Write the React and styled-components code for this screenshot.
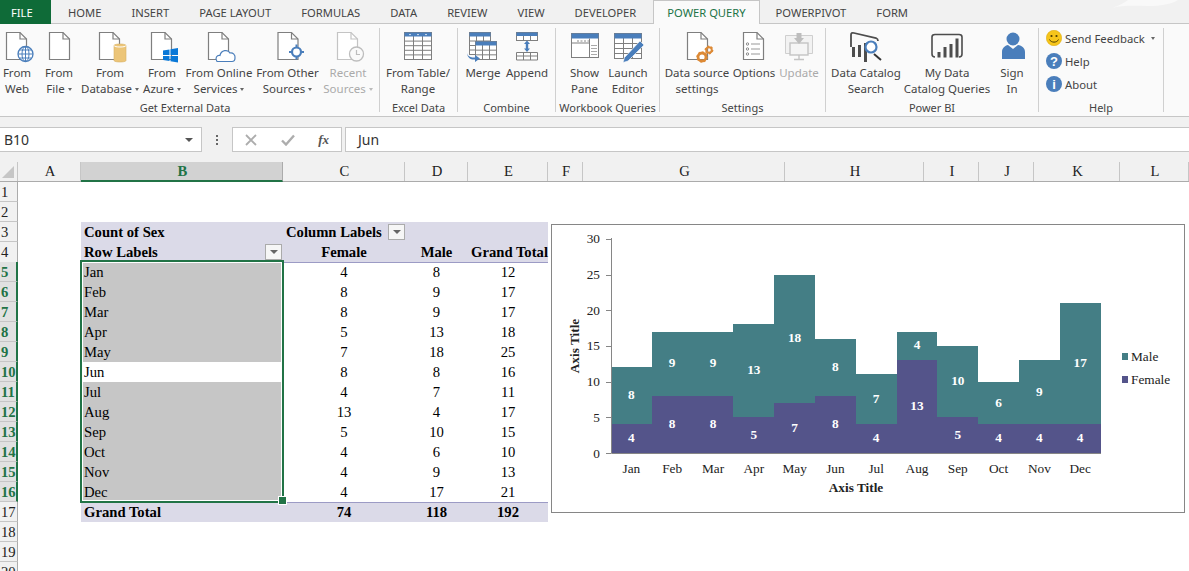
import React from 'react'
import styled, { createGlobalStyle } from 'styled-components'

const GlobalStyle = createGlobalStyle`
  html, body {
    margin: 0;
    padding: 0;
    background: #fff;
    overflow: hidden;
  }
  * { box-sizing: border-box; }
`

const uiFont = `"Noto Sans", "Open Sans", sans-serif`
const cellFont = `"Liberation Serif", "Times New Roman", serif`
const blue = '#4a7ebb'
const line = '#7f7f7f'

const tabs = ['HOME', 'INSERT', 'PAGE LAYOUT', 'FORMULAS', 'DATA', 'REVIEW', 'VIEW', 'DEVELOPER', 'POWER QUERY', 'POWERPIVOT', 'FORM']

const columns = [
  ['A', 63], ['B', 202], ['C', 122], ['D', 63], ['E', 80], ['F', 35],
  ['G', 202], ['H', 139], ['I', 55], ['J', 55], ['K', 86], ['L', 69],
]

const months = ['Jan', 'Feb', 'Mar', 'Apr', 'May', 'Jun', 'Jul', 'Aug', 'Sep', 'Oct', 'Nov', 'Dec']
const female = [4, 8, 8, 5, 7, 8, 4, 13, 5, 4, 4, 4]
const male = [8, 9, 9, 13, 18, 8, 7, 4, 10, 6, 9, 17]

const Page = styled.div`
  width: 1189px;
  height: 571px;
  overflow: hidden;
  position: relative;
  background: #fff;
  font-family: ${uiFont};
`

/* tabs */
const TabBar = styled.div`
  position: relative;
  display: flex;
  height: 24px;
  background: #f1f1f1;
  border-bottom: 1px solid #c6c6c6;
  font-size: 11.2px;
  color: #444;
`

const Swoosh = styled.svg`
  position: absolute;
  right: 0;
  top: 0;
  width: 89px;
  height: 23px;
`

const FileTab = styled.div`
  width: 51px;
  height: 24px;
  padding-left: 11px;
  background: #0f6b38;
  color: #fff;
  display: flex;
  align-items: center;
  margin-right: 2px;
`

const Tab = styled.div`
  height: 24px;
  padding: 0 15px;
  display: flex;
  align-items: center;
  white-space: nowrap;
  ${p => p.$active && `
    background: #fafafa;
    color: #217346;
    border: 1px solid #c6c6c6;
    border-bottom: none;
    padding: 0 13px;
    margin: 0 1px 0 2px;
  `}
`

/* ribbon */
const Ribbon = styled.div`
  display: flex;
  height: 93px;
  background: #fafafa;
  border-bottom: 1px solid #c6c6c6;
`

const Group = styled.div`
  width: ${p => p.$w}px;
  flex: none;
  display: flex;
  flex-direction: column;
  justify-content: space-between;
`

const Buttons = styled.div`
  display: flex;
`

const GroupLabel = styled.div`
  height: 16px;
  line-height: 16px;
  padding-right: ${p => p.$pr || 0}px;
  text-align: center;
  font-size: 11px;
  color: #444;
  white-space: nowrap;
`

const Sep = styled.div`
  width: 1px;
  flex: none;
  margin: 4px 0;
  background: #d0d0d0;
`

const RibbonButton = styled.div`
  width: ${p => p.$w}px;
  flex: none;
  padding-top: 6px;
  display: flex;
  flex-direction: column;
  align-items: center;
  font-size: 11.5px;
  line-height: 16px;
  white-space: nowrap;
  color: ${p => (p.$off ? '#aaa' : '#444')};
`

const Glyph = styled.svg`
  width: 34px;
  height: 32px;
  margin-bottom: 3px;
  overflow: visible;
  flex: none;
`

const Caret = styled.span`
  display: inline-block;
  margin-left: 3px;
  vertical-align: 2px;
  border-left: 2.5px solid transparent;
  border-right: 2.5px solid transparent;
  border-top: 3px solid ${p => (p.$off ? '#bbb' : '#666')};
`

const HelpList = styled.div`
  display: flex;
  flex-direction: column;
  gap: 7px;
  padding: 6px 0 0 7px;
`

const HelpRow = styled.div`
  display: flex;
  align-items: center;
  gap: 3px;
  height: 16px;
  font-size: 11.3px;
  color: #444;
  white-space: nowrap;
`

/* formula bar */
const FormulaStrip = styled.div`
  display: flex;
  align-items: stretch;
  height: 35px;
  padding-top: 10px;
  background: #f1f1f1;
`

const NameBox = styled.div`
  width: 202px;
  flex: none;
  display: flex;
  align-items: center;
  justify-content: space-between;
  padding: 0 8px 0 4px;
  background: #fff;
  border: 1px solid #c6c6c6;
  border-left: none;
  font-size: 14px;
  color: #333;
`

const DownArrow = styled.span`
  border-left: 4px solid transparent;
  border-right: 4px solid transparent;
  border-top: 4px solid #555;
`

const Dots = styled.div`
  width: 30px;
  flex: none;
  display: flex;
  flex-direction: column;
  align-items: center;
  justify-content: center;
  gap: 2px;
  span {
    width: 2px;
    height: 2px;
    background: #666;
  }
`

const FxBox = styled.div`
  width: 110px;
  flex: none;
  display: flex;
  align-items: center;
  justify-content: space-between;
  padding: 0 12px 0 12px;
  background: #fff;
  border: 1px solid #c6c6c6;
  margin-right: 3px;
`

const FxText = styled.span`
  font-family: ${cellFont};
  font-style: italic;
  font-weight: bold;
  font-size: 13px;
  color: #555;
`

const FormulaInput = styled.div`
  flex: 1;
  display: flex;
  align-items: center;
  padding-left: 12px;
  background: #fff;
  border: 1px solid #c6c6c6;
  border-right: none;
  font-size: 14px;
  color: #333;
`

/* sheet */
const Gap = styled.div`
  height: 10px;
  background: #f1f1f1;
`

const ColumnHeaders = styled.div`
  display: flex;
  height: 20px;
  background: #f1f1f1;
  border-bottom: 1px solid #ababab;
`

const Corner = styled.div`
  width: 18px;
  flex: none;
  border-right: 1px solid #c6c6c6;
  svg { display: block; }
`

const ColumnHead = styled.div`
  width: ${p => p.$w}px;
  flex: none;
  height: ${p => (p.$active ? 20 : 19)}px;
  padding-left: 2px;
  display: flex;
  align-items: center;
  justify-content: center;
  font-family: ${cellFont};
  font-size: 14.67px;
  color: #222;
  border-right: 1px solid #c6c6c6;
  ${p => p.$active && `
    background: #d2d2d2;
    color: #217346;
    font-weight: bold;
    border-bottom: 2px solid #217346;
    border-right: 1px solid #ababab;
  `}
`

const Row = styled.div`
  display: grid;
  grid-template-columns: 18px 63px 202px 122px 63px 80px;
  height: 20px;
  font-family: ${cellFont};
  font-size: 14.67px;
  line-height: 20px;
  color: #000;
`

const RowNum = styled.div`
  grid-column: 1;
  background: ${p => (p.$active ? '#e1e1e1' : '#f1f1f1')};
  color: ${p => (p.$active ? '#217346' : '#222')};
  font-weight: ${p => (p.$active ? 'bold' : 'normal')};
  border-bottom: 1px solid #c6c6c6;
  border-right: ${p => (p.$active ? '2px solid #217346' : '1px solid #ababab')};
  padding-left: 1px;
  overflow: hidden;
`

const Cell = styled.div`
  grid-column: ${p => p.$col};
  position: relative;
  padding: 0 3px;
  white-space: nowrap;
  text-align: ${p => p.$align || 'left'};
  font-weight: ${p => (p.$bold ? 'bold' : 'normal')};
  background: ${p => p.$bg || 'transparent'};
  ${p => p.$under && `border-bottom: 1px solid #9c9bc5;`}
  ${p => p.$over && `border-top: 1px solid #9c9bc5; line-height: 18px;`}
`

const FilterButton = styled.span`
  position: absolute;
  top: 2px;
  right: ${p => p.$right}px;
  width: 17px;
  height: 16px;
  background: #f6f6f6;
  border: 1px solid #ababab;
  display: flex;
  align-items: center;
  justify-content: center;
  &::after {
    content: '';
    border-left: 4px solid transparent;
    border-right: 4px solid transparent;
    border-top: 4px solid #666;
  }
`

const Selection = styled.div`
  position: absolute;
  left: 80px;
  top: 260px;
  width: 204px;
  height: 243px;
  border: 2px solid #217346;
  outline: 1px solid #fff;
  outline-offset: -3px;
  pointer-events: none;
  &::after {
    content: '';
    position: absolute;
    right: -5px;
    bottom: -4px;
    width: 7px;
    height: 7px;
    background: #217346;
    border: 1px solid #fff;
  }
`

const ChartFrame = styled.div`
  position: absolute;
  left: 551px;
  top: 224px;
  width: 634px;
  height: 289px;
  background: #fff;
  border: 1px solid #868686;
  svg {
    display: block;
    font-family: ${cellFont};
    font-size: 13.3px;
    fill: #222;
  }
`

const Doc = ({ x = 6, off }) => (
  <g fill="#fff" stroke={off ? '#c4c4c4' : line} strokeWidth="1.2">
    <path d={`M${x + .5} 2.5H${x + 14}L${x + 20.5} 9V29.5H${x + .5}Z`} />
    <path d={`M${x + 14} 2.5V9H${x + 20.5}`} fill="none" />
  </g>
)

const GridTable = ({ x, y, w, h, cols, rows, head = 5 }) => {
  const parts = []
  for (let i = 1; i < cols; i++) {
    const px = x + (w * i) / cols
    parts.push(<path key={'c' + i} d={`M${px} ${y}V${y + h}`} />)
  }
  for (let i = 1; i < rows; i++) {
    const py = y + head + ((h - head) * i) / rows
    parts.push(<path key={'r' + i} d={`M${x} ${py}H${x + w}`} />)
  }
  return (
    <g>
      <rect x={x} y={y} width={w} height={h} fill="#fff" stroke={line} />
      <g stroke={line} fill="none">{parts}</g>
      <rect x={x} y={y} width={w} height={head} fill={blue} />
    </g>
  )
}

const Gear = ({ cx, cy, r }) => (
  <g>
    <circle cx={cx} cy={cy} r={r} fill="none" stroke="#dd8a36" strokeWidth={r * 0.7} />
    <circle cx={cx} cy={cy} r={r + 0.7} fill="none" stroke="#dd8a36" strokeWidth="1.8" strokeDasharray="1.8 1.8" />
  </g>
)

const icons = {
  web: (
    <>
      <Doc />
      <circle cx="25.5" cy="24" r="7.5" fill="#fff" stroke={blue} strokeWidth="1.3" />
      <path d="M18 24H33M25.5 16.5V31.5M19.5 20H31.5M19.5 28H31.5" stroke={blue} fill="none" />
      <ellipse cx="25.5" cy="24" rx="3.5" ry="7.5" fill="none" stroke={blue} />
    </>
  ),
  file: <Doc x={7} />,
  database: (
    <>
      <Doc />
      <path d="M21 15.5C21 13.5 33 13.5 33 15.5V30.5C33 32.5 21 32.5 21 30.5Z" fill="#ecc578" stroke="#d9b264" strokeWidth=".6" />
      <path d="M21 15.5C21 17.5 33 17.5 33 15.5" fill="none" stroke="#fff" />
    </>
  ),
  azure: (
    <>
      <Doc />
      <path d="M18 20.5L24.5 19.5V25H18ZM25.5 19.3L33 18V25H25.5ZM18 26H24.5V31L18 30ZM25.5 26H33V32.5L25.5 31.2Z" fill="#0a78d7" />
    </>
  ),
  cloud: (
    <>
      <Doc />
      <path d="M15 31.5C12.5 28 15 25 18 25.5C19 20 26 19 28 23C31 22.5 33.5 25 33 28C33 30 32 31.5 30 31.5Z" fill="#fff" stroke={blue} strokeWidth="1.2" />
    </>
  ),
  other: (
    <>
      <Doc x={6.5} />
      <circle cx="25.5" cy="22" r="4.5" fill="#fff" stroke={blue} strokeWidth="2.2" />
      <path d="M25.5 14.5V18M25.5 26V29.5M18 22H21.5M29.5 22H33" stroke={blue} strokeWidth="2" />
    </>
  ),
  recent: (
    <>
      <Doc off />
      <circle cx="25.5" cy="24" r="7" fill="#fafafa" stroke="#bdbdbd" strokeWidth="1.3" />
      <path d="M25.5 20V24.5H29" fill="none" stroke="#bdbdbd" strokeWidth="1.2" />
    </>
  ),
  table: (
    <>
      <GridTable x={3.5} y={2.5} w={27} h={27} cols={3} rows={5} head={4} />
      <path d="M8 4L10 4L9 5.5ZM16 4L18 4L17 5.5ZM24 4L26 4L25 5.5Z" fill="#fff" />
    </>
  ),
  merge: (
    <>
      <GridTable x={3.5} y={2.5} w={21} h={22} cols={3} rows={4} head={4} />
      <GridTable x={9.5} y={11.5} w={21} h={18} cols={3} rows={3} head={4} />
      <path d="M1 23C2 27 6 28 9 27.5V25L14 28.5L9 32V29.5C5 30 1.5 28 1 23Z" fill={blue} />
    </>
  ),
  append: (
    <>
      <GridTable x={6.5} y={2.5} w={21} h={8} cols={3} rows={1} head={3.5} />
      <path d="M6.5 22.5H27.5V30H6.5ZM6.5 26H27.5M13.5 22.5V30M20.5 22.5V30" fill="#fff" stroke={line} />
      <path d="M17 10.5L20 14H18.2V18.5H20L17 22L14 18.5H15.8V14H14Z" fill={blue} />
    </>
  ),
  pane: (
    <>
      <rect x="3.5" y="3.5" width="27" height="24" fill="#fff" stroke={line} />
      <rect x="3.5" y="3.5" width="27" height="5" fill={blue} />
      <path d="M21.5 8.5V27.5M21.5 13H3.5" stroke={line} fill="none" />
      <path d="M23 15.5H29M23 18.5H29M23 21.5H29M23 24.5H29" stroke="#aaa" />
      <path d="M9 11H11M12.5 11H14.5M16 11H18M19.5 11H21" stroke="#888" />
    </>
  ),
  editor: (
    <>
      <GridTable x={3.5} y={3.5} w={27} h={25} cols={3} rows={4} head={5} />
      <path d="M29 11L33 15L17 31L12 32.5L13.5 27.5Z" fill={blue} stroke="#fff" strokeWidth=".6" />
    </>
  ),
  source: (
    <>
      <Doc x={7} />
      <Gear cx={22} cy={27} r={4} />
      <Gear cx={29} cy={20} r={2.8} />
    </>
  ),
  options: (
    <>
      <Doc />
      <circle cx="10.5" cy="14" r="1.2" fill="none" stroke="#888" />
      <circle cx="10.5" cy="19" r="1.2" fill="none" stroke="#888" />
      <circle cx="10.5" cy="24" r="1.2" fill="none" stroke="#888" />
      <path d="M14 14H23M14 19H23M14 24H23" stroke="#999" />
    </>
  ),
  update: (
    <>
      <path d="M3.5 5.5H30.5V23.5H3.5Z" fill="#f2f2f2" stroke="#cfcfcf" />
      <rect x="8" y="13" width="18" height="12" fill="#f5f5f5" stroke="#c4c4c4" strokeWidth="1.4" />
      <path d="M17 25V29M12 29.5H22" stroke="#c4c4c4" strokeWidth="1.4" />
      <path d="M14.5 3V8H12L17 14L22 8H19.5V3Z" fill="#bdbdbd" />
    </>
  ),
  catalog: (
    <>
      <path d="M2 17V5C2 3 3 2.5 5 3L27 8C28.5 8.5 29 9 29 11" fill="none" stroke="#4d4d4d" strokeWidth="1.8" />
      <path d="M3 17H6V27H3ZM9 15H12V27H9ZM15 13H18V32H15Z" fill="#4d4d4d" />
      <path d="M25 24L32 30" stroke="#333" strokeWidth="2" />
      <circle cx="22" cy="17" r="5.5" fill="#fff" stroke={blue} strokeWidth="2.2" />
    </>
  ),
  myData: (
    <>
      <path d="M5 27C3 27 2 26 2 24V7C2 5 3 4.5 5 4.5H29C31 4.5 32 5 32 7V24C32 26 31 27 29 27" fill="none" stroke="#4d4d4d" strokeWidth="1.6" />
      <path d="M7.5 22H10.5V27.5H7.5ZM13.5 17H16.5V27.5H13.5ZM19.5 14H22.5V27.5H19.5ZM25.5 8.5H28.5V27.5H25.5Z" fill="#4d4d4d" />
    </>
  ),
  person: (
    <>
      <circle cx="18" cy="9" r="6.5" fill={blue} />
      <path d="M7 29V22C7 18 10 15.5 13 15L18 19L23 15C27 15.5 30 18 30 22V29Z" fill={blue} />
    </>
  ),
}

const Cross = () => (
  <svg width="12" height="12" viewBox="0 0 12 12">
    <path d="M1 1L11 11M11 1L1 11" stroke="#adadad" strokeWidth="1.8" />
  </svg>
)

const Tick = () => (
  <svg width="14" height="12" viewBox="0 0 14 12">
    <path d="M1 6.5L5 10.5L13 1.5" fill="none" stroke="#adadad" strokeWidth="2.4" />
  </svg>
)

const Smiley = () => (
  <svg width="16" height="16" viewBox="0 0 16 16">
    <circle cx="8" cy="8" r="7.7" fill="#f6c51b" stroke="#d9a400" strokeWidth=".5" />
    <circle cx="5.5" cy="6" r="1.1" fill="#4d3b00" />
    <circle cx="10.5" cy="6" r="1.1" fill="#4d3b00" />
    <path d="M3.5 9.5C5 13 11 13 12.5 9.5" fill="none" stroke="#4d3b00" strokeWidth="1" />
  </svg>
)

const RoundGlyph = ({ children }) => (
  <svg width="16" height="16" viewBox="0 0 16 16">
    <circle cx="8" cy="8" r="8" fill={blue} />
    <text x="8" y="12.6" textAnchor="middle" fontSize="13" fontWeight="bold" fontFamily="Liberation Sans, sans-serif" fill="#fff">{children}</text>
  </svg>
)

const Btn = ({ w, icon, l1, l2, caret, off }) => (
  <RibbonButton $w={w} $off={off}>
    <Glyph viewBox="0 0 34 32">{icons[icon]}</Glyph>
    <div>{l1}</div>
    {l2 && <div>{l2}{caret && <Caret $off={off} />}</div>}
  </RibbonButton>
)

const StackedChart = () => {
  const x0 = 611
  const bottom = 453
  const unit = 7.14
  const step = 40.8
  const edge = i => Math.round(x0 + i * step)
  const stepPath = (top, base) => {
    let d = `M${edge(0)} ${Math.round(bottom - base[0] * unit)}`
    top.forEach((v, i) => {
      d += `V${Math.round(bottom - v * unit)}H${edge(i + 1)}`
    })
    for (let i = base.length - 1; i >= 0; i--) {
      d += `V${Math.round(bottom - base[i] * unit)}H${edge(i)}`
    }
    return d + 'Z'
  }
  const totals = male.map((v, i) => v + female[i])
  return (
    <svg width="632" height="287" viewBox="552 225 632 287">
      {[0, 5, 10, 15, 20, 25, 30].map(v => (
        <g key={v}>
          <path d={`M606 ${Math.round(bottom - v * unit) + .5}H611`} stroke="#868686" />
          <text x="600" y={bottom - v * unit + 4.5} textAnchor="end">{v}</text>
        </g>
      ))}
      <path d={stepPath(totals, female)} fill="#447e85" shapeRendering="crispEdges" />
      <path d={stepPath(female, months.map(() => 0))} fill="#54548a" shapeRendering="crispEdges" />
      {months.map((m, i) => {
        const f = female[i] * unit
        const t = male[i] * unit
        const cx = x0 + i * step + step / 2
        return (
          <g key={m}>
            <text x={cx} y={bottom - f - t / 2 + 3.5} textAnchor="middle" fontWeight="bold" style={{ fill: '#fff' }}>{male[i]}</text>
            <text x={cx} y={bottom - f / 2 + 3.5} textAnchor="middle" fontWeight="bold" style={{ fill: '#fff' }}>{female[i]}</text>
            <text x={cx} y="472.5" textAnchor="middle">{m}</text>
          </g>
        )
      })}
      <path d="M611.5 238V453.5H1101" fill="none" stroke="#868686" />
      <text x="856" y="492" textAnchor="middle" fontWeight="bold">Axis Title</text>
      <text transform="translate(579 346) rotate(-90)" textAnchor="middle" fontWeight="bold">Axis Title</text>
      <rect x="1122" y="353" width="6" height="7" fill="#447e85" />
      <text x="1131" y="361">Male</text>
      <rect x="1122" y="376" width="6" height="7" fill="#54548a" />
      <text x="1131" y="384">Female</text>
    </svg>
  )
}

export default function App() {
  const rowNums = Array.from({ length: 20 }, (_, i) => i + 1)
  const headBg = '#dbdae8'
  const selBg = '#c6c6c6'

  const renderCells = n => {
    if (n === 3) {
      return (
        <>
          <Cell $col={3} $bold $bg={headBg}>Count of Sex</Cell>
          <Cell $col={4} $bold $bg={headBg}>Column Labels<FilterButton $right={0} /></Cell>
          <Cell $col={5} $bg={headBg} />
          <Cell $col={6} $bg={headBg} />
        </>
      )
    }
    if (n === 4) {
      return (
        <>
          <Cell $col={3} $bold $bg={headBg} $under>Row Labels<FilterButton $right={1} /></Cell>
          <Cell $col={4} $bold $bg={headBg} $under $align="center">Female</Cell>
          <Cell $col={5} $bold $bg={headBg} $under $align="center">Male</Cell>
          <Cell $col={6} $bold $bg={headBg} $under $align="center">Grand Total</Cell>
        </>
      )
    }
    if (n >= 5 && n <= 16) {
      const i = n - 5
      return (
        <>
          <Cell $col={3} $bg={i === 5 ? '#fff' : selBg}>{months[i]}</Cell>
          <Cell $col={4} $align="center">{female[i]}</Cell>
          <Cell $col={5} $align="center">{male[i]}</Cell>
          <Cell $col={6} $align="center">{female[i] + male[i]}</Cell>
        </>
      )
    }
    if (n === 17) {
      return (
        <>
          <Cell $col={3} $bold $bg={headBg} $over>Grand Total</Cell>
          <Cell $col={4} $bold $bg={headBg} $over $align="center">74</Cell>
          <Cell $col={5} $bold $bg={headBg} $over $align="center">118</Cell>
          <Cell $col={6} $bold $bg={headBg} $over $align="center">192</Cell>
        </>
      )
    }
    return null
  }

  return (
    <Page>
      <GlobalStyle />
      <TabBar>
        <FileTab>FILE</FileTab>
        {tabs.map(t => <Tab key={t} $active={t === 'POWER QUERY'}>{t}</Tab>)}
        <Swoosh viewBox="1100 0 89 23">
          <path d="M1112 8C1118 6 1124 3 1128 0H1178C1172 4 1160 6 1148 6C1136 6 1122 5 1112 8Z" fill="#f9f9f9" />
        </Swoosh>
      </TabBar>

      <Ribbon>
        <Group $w={379}>
          <Buttons>
            <Btn w={34} icon="web" l1="From" l2="Web" />
            <Btn w={50} icon="file" l1="From" l2="File" caret />
            <Btn w={52} icon="database" l1="From" l2="Database" caret />
            <Btn w={52} icon="azure" l1="From" l2="Azure" caret />
            <Btn w={62} icon="cloud" l1="From Online" l2="Services" caret />
            <Btn w={75} icon="other" l1="From Other" l2="Sources" caret />
            <Btn w={46} icon="recent" l1="Recent" l2="Sources" caret off />
          </Buttons>
          <GroupLabel $pr={9}>Get External Data</GroupLabel>
        </Group>
        <Sep />
        <Group $w={77}>
          <Buttons>
            <Btn w={76} icon="table" l1="From Table/" l2="Range" />
          </Buttons>
          <GroupLabel>Excel Data</GroupLabel>
        </Group>
        <Sep />
        <Group $w={97}>
          <Buttons>
            <Btn w={50} icon="merge" l1="Merge" />
            <Btn w={38} icon="append" l1="Append" />
          </Buttons>
          <GroupLabel>Combine</GroupLabel>
        </Group>
        <Sep />
        <Group $w={103}>
          <Buttons>
            <Btn w={57} icon="pane" l1="Show" l2="Pane" />
            <Btn w={30} icon="editor" l1="Launch" l2="Editor" />
          </Buttons>
          <GroupLabel>Workbook Queries</GroupLabel>
        </Group>
        <Sep />
        <Group $w={165}>
          <Buttons>
            <Btn w={74} icon="source" l1="Data source" l2="settings" />
            <Btn w={40} icon="options" l1="Options" />
            <Btn w={50} icon="update" l1="Update" off />
          </Buttons>
          <GroupLabel>Settings</GroupLabel>
        </Group>
        <Sep />
        <Group $w={212}>
          <Buttons>
            <Btn w={80} icon="catalog" l1="Data Catalog" l2="Search" />
            <Btn w={82} icon="myData" l1="My Data" l2="Catalog Queries" />
            <Btn w={48} icon="person" l1="Sign" l2="In" />
          </Buttons>
          <GroupLabel>Power BI</GroupLabel>
        </Group>
        <Sep />
        <Group $w={124}>
          <HelpList>
            <HelpRow><Smiley />Send Feedback<Caret /></HelpRow>
            <HelpRow><RoundGlyph>?</RoundGlyph>Help</HelpRow>
            <HelpRow><RoundGlyph>i</RoundGlyph>About</HelpRow>
          </HelpList>
          <GroupLabel>Help</GroupLabel>
        </Group>
        <Sep />
      </Ribbon>

      <FormulaStrip>
        <NameBox>B10<DownArrow /></NameBox>
        <Dots><span /><span /><span /></Dots>
        <FxBox><Cross /><Tick /><FxText>fx</FxText></FxBox>
        <FormulaInput>Jun</FormulaInput>
      </FormulaStrip>
      <Gap />

      <ColumnHeaders>
        <Corner>
          <svg width="17" height="19" viewBox="0 0 17 19">
            <path d="M14 4V16H2Z" fill="#c6c6c6" />
          </svg>
        </Corner>
        {columns.map(([name, w]) => <ColumnHead key={name} $w={w} $active={name === 'B'}>{name}</ColumnHead>)}
      </ColumnHeaders>

      {rowNums.map(n => (
        <Row key={n}>
          <RowNum $active={n >= 5 && n <= 16}>{n}</RowNum>
          {renderCells(n)}
        </Row>
      ))}

      <Selection />
      <ChartFrame><StackedChart /></ChartFrame>
    </Page>
  )
}
